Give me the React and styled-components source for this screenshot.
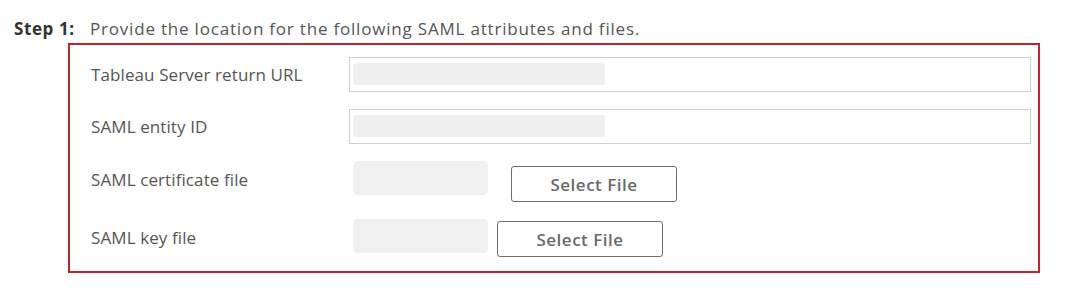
import React from 'react';
import styled, {createGlobalStyle, css} from "styled-components";

const GlobalStyle = createGlobalStyle`
  body {
    margin: 0;
    background: #ffffff;
    font-family: "Open Sans", "Liberation Sans", sans-serif;
  }
`

const rows = [
    {label: "Tableau Server return URL", kind: "text"},
    {label: "SAML entity ID", kind: "text"},
    {label: "SAML certificate file", kind: "file", buttonGap: 23, buttonTop: 5},
    {label: "SAML key file", kind: "file", buttonGap: 9, buttonTop: 2},
];

export default function App() {
    return (
        <Page>
            <GlobalStyle/>
            <Heading>
                <StepLabel>Step 1:</StepLabel>
                <StepText>Provide the location for the following SAML attributes and files.</StepText>
            </Heading>
            <Panel>
                {rows.map((row, i) => (
                    <Row key={row.label} kind={row.kind} first={i === 0}>
                        <Label kind={row.kind}>{row.label}</Label>
                        {row.kind === "text" ? (
                            <TextField>
                                <Filled/>
                            </TextField>
                        ) : (
                            <>
                                <FileSlot/>
                                <SelectButton gap={row.buttonGap} top={row.buttonTop}>Select File</SelectButton>
                            </>
                        )}
                    </Row>
                ))}
            </Panel>
        </Page>
    );
}

const Page = styled.div`
  width: 1089px;
  height: 294px;
  padding-top: 17px;
  box-sizing: border-box;
`

const Heading = styled.div`
  display: flex;
  align-items: baseline;
  padding-left: 14px;
  height: 26px;
`

const StepLabel = styled.span`
  font-size: 17px;
  font-weight: 700;
  color: #333333;
  width: 76px;
  letter-spacing: 0.6px;
`

const StepText = styled.span`
  font-size: 17px;
  color: #555555;
  letter-spacing: 0.8px;
`

const Panel = styled.div`
  margin-left: 68px;
  width: 972px;
  height: 230px;
  box-sizing: border-box;
  border: 2px solid #b9272e;
  padding: 12px 7px 0 21px;
`

const Row = styled.div`
  display: flex;
  align-items: flex-start;
  margin-top: 20px;

  ${(p) => p.first && css`
    margin-top: 0;
  `}
  ${(p) => p.kind === "file" && css`
    margin-top: 15px;
    & + & {
      margin-top: 17px;
    }
  `}
`

const Label = styled.div`
  width: 258px;
  flex-shrink: 0;
  font-size: 17px;
  color: #555555;
  line-height: 35px;
  letter-spacing: 0.1px;

  ${(p) => p.kind === "file" && css`
    line-height: 34px;
    padding-top: 2px;
  `}
`

const TextField = styled.div`
  flex: 1;
  height: 35px;
  box-sizing: border-box;
  border: 1.5px solid #cfcfcf;
  padding: 5px 3px;
`

const Filled = styled.div`
  width: 252px;
  height: 22px;
  background: #efefef;
  border-radius: 3px;
`

const FileSlot = styled.div`
  width: 135px;
  height: 34px;
  margin-left: 4px;
  background: #f0f0f0;
  border-radius: 5px;
`

const SelectButton = styled.button`
  width: 166px;
  height: 36px;
  margin-left: ${(p) => p.gap}px;
  margin-top: ${(p) => p.top}px;
  box-sizing: border-box;
  background: #ffffff;
  border: 1.5px solid #6e6e6e;
  border-radius: 3px;
  font-family: "Open Sans", "Liberation Sans", sans-serif;
  font-size: 17px;
  font-weight: 600;
  color: #6a6a6a;
  letter-spacing: 0.5px;
  padding: 0;
`
